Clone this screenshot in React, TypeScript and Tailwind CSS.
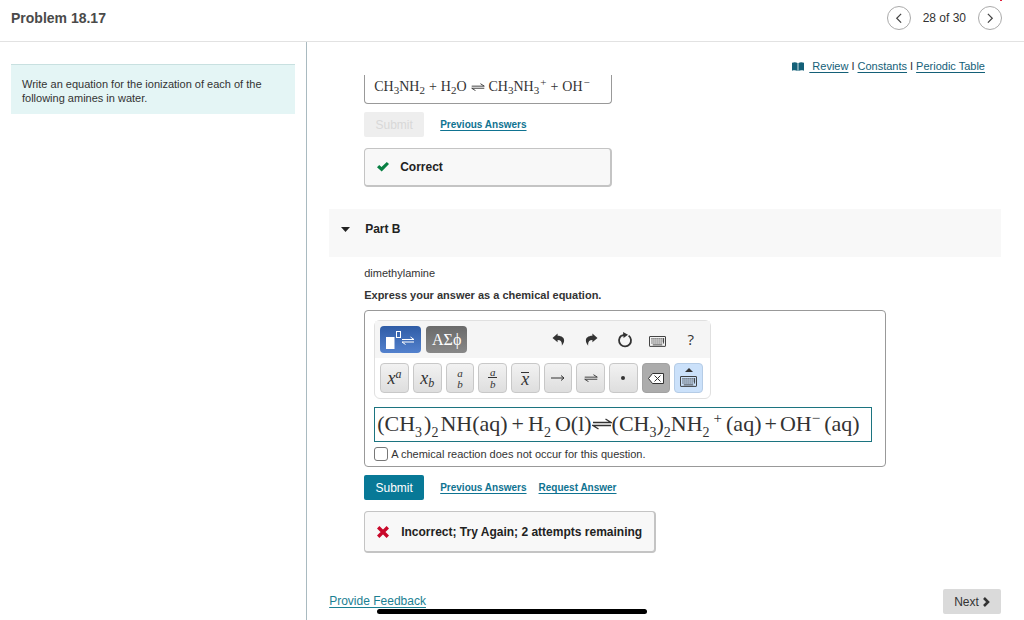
import React, { useState } from 'react';

function Equilibrium({ className }: { className?: string }) {
  return (
    <svg viewBox="0 0 20 12" className={className} fill="none" stroke="currentColor" strokeWidth="1.3" aria-hidden="true">
      <path d="M1 4.5H19L13.5 1M19 7.5H1L6.5 11" />
    </svg>
  );
}

function Keyboard({ className }: { className?: string }) {
  return (
    <svg viewBox="0 0 18 12" className={className} fill="none" stroke="currentColor" aria-hidden="true">
      <rect x="0.5" y="0.5" width="17" height="10.5" rx="0.5" />
      <path d="M2.5 3H16M2.5 5.3H16M2.5 7.4H14" strokeWidth="1.2" strokeDasharray="1.3 0.8" />
      <path d="M4 9.4H14" strokeWidth="0.9" />
      <path d="M15.4 2.4V8" strokeWidth="0.9" />
    </svg>
  );
}

function Undo({ className }: { className?: string }) {
  return (
    <svg viewBox="0 0 13 13" className={className} fill="currentColor" aria-hidden="true">
      <path d="M5.6 0.5L0.5 5L5.6 9.2V6.9C8.6 6.8 10.3 8.5 9.8 12.7C13.9 8 12.6 2.9 5.6 2.8Z" />
    </svg>
  );
}

function Sub({ children }: { children: React.ReactNode }) {
  return <sub className="-bottom-1.5 text-[14px] leading-none">{children}</sub>;
}

function Sup({ children }: { children: React.ReactNode }) {
  return <sup className="-top-2 text-[15px] leading-none">{children}</sup>;
}

const tools = [
  { label: 'Superscript', content: <span className="text-[18px] italic">x<sup className="text-[12px]">a</sup></span> },
  { label: 'Subscript', content: <span className="text-[18px] italic">x<sub className="text-[12px]">b</sub></span> },
  { label: 'Stack', content: <Stack /> },
  { label: 'Fraction', content: <Stack line /> },
  { label: 'Overline', content: <span className="border-t border-current text-[18px] leading-3 italic">x</span> },
  {
    label: 'Reaction arrow',
    content: (
      <svg viewBox="0 0 14 8" className="w-3.5" fill="none" stroke="currentColor">
        <path d="M0 4H13M10 1.5L13 4L10 6.5" />
      </svg>
    ),
  },
  { label: 'Equilibrium arrow', content: <Equilibrium className="w-3.5" /> },
  { label: 'Dot', content: <span className="size-1 rounded-full bg-[#333]" /> },
];

function Stack({ line }: { line?: boolean }) {
  return (
    <span className="flex flex-col text-center text-[11px] leading-[10px] italic">
      <span className={line ? 'border-b border-current px-0.5' : 'px-0.5'}>a</span>
      <span className="pt-px">b</span>
    </span>
  );
}

const linkStyle = 'text-[10px] font-bold text-[#0f7391] underline underline-offset-2';
const roundButton = 'flex size-6 items-center justify-center rounded-full border border-[#aaa] text-[#444]';

function Header() {
  return (
    <header className="flex h-[42px] items-start justify-between border-b border-[#e2e2e2] pr-[22px] pl-[11px]">
      <h1 className="pt-2 text-[14px] leading-5 font-bold text-[#4a4a4a]">Problem 18.17</h1>
      <nav className="flex items-center gap-3 pt-1.5">
        <button className={roundButton} aria-label="Previous item">
          <svg viewBox="0 0 8 12" className="w-[7px]" fill="none" stroke="currentColor" strokeWidth="1.4"><path d="M7 1L2 6L7 11" /></svg>
        </button>
        <span className="text-[12px] leading-6 text-[#333]">28 of 30</span>
        <button className={roundButton} aria-label="Next item">
          <svg viewBox="0 0 8 12" className="w-[7px]" fill="none" stroke="currentColor" strokeWidth="1.4"><path d="M1 1L6 6L1 11" /></svg>
        </button>
      </nav>
      <span className="absolute top-0 right-[22px] h-px w-0.5 bg-[#e0203c]" />
    </header>
  );
}

function Toolbar() {
  return (
    <div className="w-[337px] rounded-md border border-[#e0e0e0] font-['Liberation_Serif',serif] text-[#333]">
      <div className="flex h-[37px] items-center gap-[5px] bg-[#f5f5f5] pr-[3px] pl-[5px]">
        <button aria-label="Templates" className="flex h-[27px] w-[41px] items-center rounded bg-linear-to-b from-[#2f5ca6] to-[#5381cd] pl-1.5 text-white">
          <svg viewBox="0 0 30 20" className="w-[30px]" fill="none" stroke="currentColor" aria-hidden="true">
            <rect x="0" y="7" width="8.5" height="12" fill="currentColor" stroke="none" />
            <rect x="10.5" y="1.5" width="4" height="6" />
            <path d="M16 9.5H28L24.5 7M28 12H16L19.5 14.5" />
          </svg>
        </button>
        <button aria-label="Greek letters" className="h-[27px] w-[41px] rounded bg-linear-to-b from-[#6a6a6a] to-[#888] text-[16px] text-white">ΑΣϕ</button>
        <div className="ml-auto flex items-center text-[#333]">
          <button aria-label="Undo" className="flex w-[33px] justify-center"><Undo className="w-[13px]" /></button>
          <button aria-label="Redo" className="flex w-[33px] justify-center"><Undo className="w-[13px] -scale-x-100" /></button>
          <button aria-label="Reset" className="flex w-[33px] justify-center">
            <svg viewBox="0 0 16 16" className="w-4" fill="none" stroke="currentColor" strokeWidth="1.8">
              <path d="M4.2 3.8A6 6 0 1 0 11.6 3.6" />
              <path d="M6 0L11 2.7L6.6 6Z" fill="currentColor" stroke="none" />
              <path d="M4.2 3.8L8 2.6" />
            </svg>
          </button>
          <button aria-label="Keyboard shortcuts" className="flex w-[33px] justify-center pt-1"><Keyboard className="w-[17px]" /></button>
          <button aria-label="Help" className="w-[33px] font-['Open_Sans',sans-serif] text-[15px]">?</button>
        </div>
      </div>
      <div className="grid grid-cols-10 gap-1 py-[5px] pr-[7px] pl-[5px]">
        {tools.map((tool) => (
          <button key={tool.label} aria-label={tool.label} className="flex h-[30px] items-center justify-center rounded border border-[#c8c8c8] bg-linear-to-b from-[#f2f2f2] to-[#dedede]">
            {tool.content}
          </button>
        ))}
        <button aria-label="Backspace" className="flex h-[30px] items-center justify-center rounded border border-[#a2a2a2] bg-[#acacac]">
          <svg viewBox="0 0 16 11" className="w-4" fill="#fff" stroke="#333">
            <path d="M4.5 0.5H15.5V10.5H4.5L0.5 5.5Z" />
            <path d="M6.5 2.5L12.5 8.5M12.5 2.5L6.5 8.5" />
          </svg>
        </button>
        <button aria-label="Show keyboard" className="flex h-[30px] flex-col items-center justify-center gap-1 rounded border border-[#b5cce6] bg-[#cbe1fa]">
          <svg viewBox="0 0 8 4" className="w-2" fill="#333"><path d="M4 0L8 4H0Z" /></svg>
          <Keyboard className="w-[17px]" />
        </button>
      </div>
    </div>
  );
}

function AnswerField() {
  return (
    <div
      role="textbox"
      aria-label="Chemical equation"
      contentEditable
      suppressContentEditableWarning
      className="mt-2 mr-[13px] flex h-[35px] items-center border border-[#1c7480] pb-0.5 pl-0.5 font-['Liberation_Serif',serif] text-[22px] leading-8 whitespace-nowrap text-[#333]"
    >
      <span>(CH<Sub>3</Sub></span>
      <span className="ml-0.5">)<Sub>2</Sub></span>
      <span className="ml-0.5">NH(aq)</span>
      <span className="mx-1">+</span>
      <span>H<Sub>2</Sub></span>
      <span className="ml-1">O(l)</span>
      <Equilibrium className="h-4 w-5" />
      <span>(CH<Sub>3</Sub>)<Sub>2</Sub></span>
      <span>NH<Sub>2</Sub></span>
      <span className="ml-1"><Sup>+</Sup></span>
      <span className="ml-1">(aq)</span>
      <span className="mx-[3px]">+</span>
      <span>OH<Sup>−</Sup></span>
      <span className="ml-1">(aq)</span>
    </div>
  );
}

function App() {
  const [noReaction, setNoReaction] = useState(false);

  return (
    <div className="flex min-h-screen flex-col bg-white font-['Liberation_Sans',sans-serif] text-[#333]">
      <Header />
      <div className="flex flex-1">
        <aside className="w-[30%] shrink-0 border-r border-[#a9bac0] pt-[22px] pr-[11px] pl-[11px]">
          <p className="border-t border-[#c8e0e0] bg-[#e4f5f5] px-[11px] pt-3 pb-[9px] text-[11px] leading-[14px]">
            Write an equation for the ionization of each of the following amines in water.
          </p>
        </aside>

        <main className="flex-1 pr-[23px] pl-[22px]">
          <nav className="flex items-center justify-end pt-4 pr-4 text-[11px] leading-4">
            <svg viewBox="0 0 12 9" className="w-3" fill="#146078" aria-hidden="true">
              <path d="M0 0.7C2 0 4 0 5.6 1V9C4 8.2 2 8.2 0 8.7ZM12 0.7C10 0 8 0 6.4 1V9C8 8.2 10 8.2 12 8.7Z" />
            </svg>
            <a href="#review" className="ml-1 pl-px whitespace-pre text-[#146078] underline underline-offset-2">{' Review'}</a>
            <span className="mx-[3px]">I</span>
            <a href="#constants" className="text-[#146078] underline underline-offset-2">Constants</a>
            <span className="mx-[3px]">I</span>
            <a href="#periodic-table" className="text-[#146078] underline underline-offset-2">Periodic Table</a>
          </nav>

          <section className="px-[35px] pt-px">
            <div className="flex h-[29px] w-[248px] items-center rounded-b border border-t-0 border-[#999] pb-1 pl-[9px] font-['Liberation_Serif',serif] text-[14px] leading-5 whitespace-nowrap">
              <span>CH<sub className="text-[11px]">3</sub>NH<sub className="text-[11px]">2</sub></span>
              <span className="mx-1">+</span>
              <span>H<sub className="text-[11px]">2</sub>O</span>
              <Equilibrium className="mx-1 w-3.5" />
              <span>CH<sub className="text-[11px]">3</sub>NH<sub className="text-[11px]">3</sub><sup className="ml-px text-[11px]">+</sup></span>
              <span className="mx-1">+</span>
              <span>OH<sup className="ml-px text-[11px]">−</sup></span>
            </div>
            <div className="mt-2 flex items-center gap-4">
              <button disabled className="h-[25px] w-[60px] rounded-xs bg-[#eee] text-[12px] text-[#d8d8d8]">Submit</button>
              <a href="#answers-a" className={linkStyle}>Previous Answers</a>
            </div>
            <div className="mt-[11px] flex h-[39px] w-[248px] items-center gap-[11px] rounded border border-r-2 border-b-2 border-[#c4c4c4] bg-[#f8f8f8] pl-3 text-[12px] font-bold text-[#222]">
              <svg viewBox="0 0 12 10" className="w-3" fill="#088043" aria-hidden="true"><path d="M0 5.2L2.2 3L4.5 5L9.8 0L12 2L4.7 9.5Z" /></svg>
              Correct
            </div>
          </section>

          <div className="mt-[22px] flex h-12 items-start bg-[#f8f8f8] pt-2.5 pl-3">
            <button className="flex items-center gap-[15px] text-[12px] leading-5 font-bold text-[#222]">
              <svg viewBox="0 0 9 5" className="w-[9px]" fill="currentColor" aria-hidden="true"><path d="M0 0H9L4.5 5Z" /></svg>
              Part B
            </button>
          </div>

          <section className="px-[35px] pt-2">
            <p className="text-[11px] leading-4">dimethylamine</p>
            <p className="mt-1.5 text-[11px] leading-4 font-bold">Express your answer as a chemical equation.</p>
            <div className="mt-[7px] max-w-[522px] rounded border border-[#999] pt-[9px] pb-1 pl-[9px]">
              <Toolbar />
              <AnswerField />
              <label className="mt-1 flex h-4 items-center gap-[3px] text-[11px]">
                <input
                  type="checkbox"
                  checked={noReaction}
                  onChange={(e) => setNoReaction(e.target.checked)}
                  className="size-3.5 appearance-none rounded-[3px] border border-[#777] bg-white checked:bg-[#0f7391]"
                />
                A chemical reaction does not occur for this question.
              </label>
            </div>
            <div className="mt-2 flex items-center">
              <button className="h-[25px] w-[60px] rounded-xs bg-[#087997] text-[12px] text-white">Submit</button>
              <a href="#answers-b" className={`${linkStyle} ml-4`}>Previous Answers</a>
              <a href="#request" className={`${linkStyle} ml-3`}>Request Answer</a>
            </div>
            <div className="mt-[11px] flex h-[42px] w-[292px] items-center gap-3 rounded border border-r-2 border-b-2 border-[#c4c4c4] bg-[#f8f8f8] pl-3 text-[12px] font-bold whitespace-nowrap text-[#222]">
              <svg viewBox="0 0 12 12" className="w-3" fill="none" stroke="#c9082a" strokeWidth="3.4" aria-hidden="true"><path d="M1.2 1.2L10.8 10.8M10.8 1.2L1.2 10.8" /></svg>
              Incorrect; Try Again; 2 attempts remaining
            </div>
          </section>

          <footer className="mt-9 flex items-start justify-between">
            <a href="#feedback" className="text-[12px] leading-6 text-[#1b8092] underline underline-offset-2">Provide Feedback</a>
            <button className="flex h-[25px] w-[58px] items-center justify-center gap-1 rounded-xs bg-[#dadada] text-[12px]">
              Next
              <svg viewBox="0 0 7 10" className="w-[7px]" fill="none" stroke="currentColor" strokeWidth="2.6" aria-hidden="true"><path d="M1 1L5 5L1 9" /></svg>
            </button>
          </footer>
        </main>
      </div>
      <div className="fixed bottom-1.5 left-1/2 h-[5px] w-[270px] -translate-x-1/2 rounded-full bg-black" />
    </div>
  );
}

export default App;
